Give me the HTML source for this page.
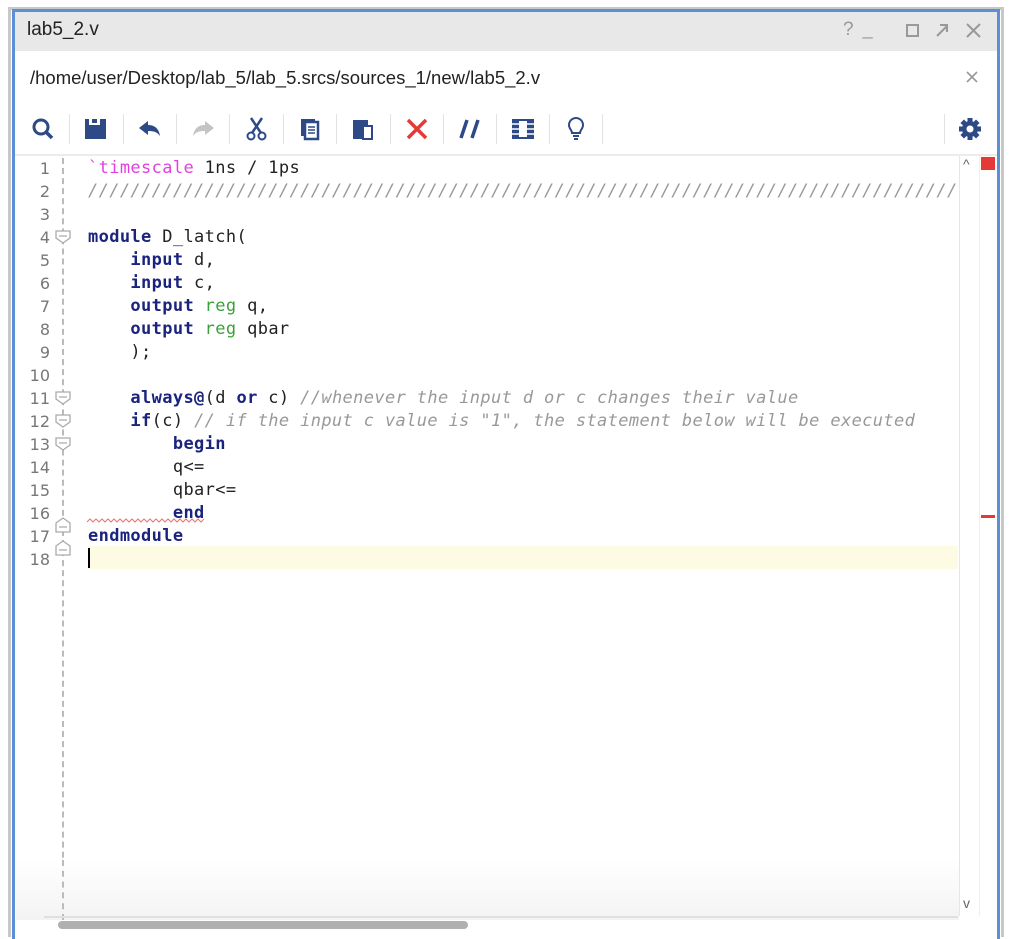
<!DOCTYPE html>
<html><head><meta charset="utf-8"><style>
*{margin:0;padding:0;box-sizing:border-box}
body{width:1024px;height:926px;background:#fff;position:relative;overflow:hidden;font-family:"Liberation Sans",sans-serif}
.abs{position:absolute}
.code{font-family:"DejaVu Sans Mono","Liberation Mono",monospace;font-size:17px;letter-spacing:0.37px;line-height:23px;white-space:pre;color:#222}
.ln{font-family:"DejaVu Sans",sans-serif;font-size:16px;color:#777;line-height:23px;text-align:right;width:34px}
.kw{color:#1a237e;font-weight:bold}
.gr{color:#3aa13a}
.mg{color:#e040e0}
.cm{color:#999;font-style:italic}
.sep{position:absolute;top:114px;width:1px;height:30px;background:#e2e2e2}
.ic{position:absolute;top:117px}
</style></head><body>
<!-- outer borders -->
<div class="abs" style="left:8px;top:7px;width:996px;height:930px;border:3px solid #c8c8c8;border-bottom:none"></div>
<div class="abs" style="left:12px;top:9px;width:988px;height:930px;border:3px solid #5b8fd6;border-bottom:none"></div>
<!-- title bar -->
<div class="abs" style="left:15px;top:12px;width:982px;height:39px;background:#e8e8e8"></div>
<div class="abs" style="left:27px;top:19px;font-size:19px;color:#222">lab5_2.v</div>
<div class="abs" style="left:843px;top:19px;font-size:19px;color:#999;letter-spacing:9px">?<span style="font-size:18px">_</span></div>
<div class="abs" style="left:906px;top:24px;width:13px;height:13px;border:2px solid #999"></div>
<svg class="abs" style="left:934px;top:22px" width="16" height="16"><path d="M3 14L13 4M6 3H13V10" stroke="#999" stroke-width="2" fill="none"/><path d="M3 8V14" stroke="#999" stroke-width="0"/></svg>
<svg class="abs" style="left:965px;top:22px" width="17" height="17"><path d="M2 2L15 15M15 2L2 15" stroke="#999" stroke-width="2"/></svg>
<!-- path bar -->
<div class="abs" style="left:30px;top:67px;font-size:18.5px;color:#222">/home/user/Desktop/lab_5/lab_5.srcs/sources_1/new/lab5_2.v</div>
<svg class="abs" style="left:966px;top:71px" width="12" height="12"><path d="M1 1L11 11M11 1L1 11" stroke="#999" stroke-width="1.6"/></svg>
<!-- toolbar -->
<svg class="ic" style="left:31px" width="24" height="24"><circle cx="10" cy="10" r="7" stroke="#2d4a86" stroke-width="3" fill="none"/><path d="M15 15L21 21" stroke="#2d4a86" stroke-width="3.5"/></svg>
<div class="sep" style="left:69px"></div>
<svg class="ic" style="left:84px" width="24" height="24"><path d="M1 2H5V8H16V2H22V22H1Z" fill="#2d4a86"/><rect x="8" y="2" width="5" height="4" fill="#2d4a86"/></svg>
<div class="sep" style="left:123px"></div>
<svg class="ic" style="left:138px" width="24" height="24"><path d="M1 11L10 4V8C17 8 21 12 22 19C19 15 16 14 10 14V18Z" fill="#2d4a86"/></svg>
<div class="sep" style="left:176px"></div>
<svg class="ic" style="left:191px" width="24" height="24"><path d="M23 11L14 4V8C7 8 3 12 2 19C5 15 8 14 14 14V18Z" fill="#c4c4c4"/></svg>
<div class="sep" style="left:229px"></div>
<svg class="ic" style="left:245px" width="24" height="24"><path d="M6 1L16 16M17 1L7 16" stroke="#2d4a86" stroke-width="2.5"/><circle cx="6" cy="19" r="3.5" stroke="#2d4a86" stroke-width="2" fill="none"/><circle cx="17" cy="19" r="3.5" stroke="#2d4a86" stroke-width="2" fill="none"/></svg>
<div class="sep" style="left:283px"></div>
<svg class="ic" style="left:299px" width="24" height="24"><rect x="2" y="2" width="14" height="17" fill="#2d4a86"/><rect x="6" y="5" width="13" height="17" fill="#fff" stroke="#2d4a86" stroke-width="2.5"/><path d="M9 10H16M9 13H16M9 16H16" stroke="#2d4a86" stroke-width="1.5"/></svg>
<div class="sep" style="left:336px"></div>
<svg class="ic" style="left:351px" width="24" height="24"><rect x="2" y="3" width="15" height="19" fill="#2d4a86"/><rect x="12" y="9" width="9" height="13" fill="#fff" stroke="#2d4a86" stroke-width="2"/></svg>
<div class="sep" style="left:390px"></div>
<svg class="ic" style="left:405px" width="24" height="24"><path d="M3 3L21 21M21 3L3 21" stroke="#e53935" stroke-width="3.5"/></svg>
<div class="sep" style="left:443px"></div>
<svg class="ic" style="left:458px" width="24" height="24"><path d="M9 3L3 21M20 3L14 21" stroke="#2d4a86" stroke-width="3.5"/></svg>
<div class="sep" style="left:496px"></div>
<svg class="ic" style="left:511px" width="24" height="24"><rect x="1" y="2" width="22" height="20" fill="#2d4a86"/><rect x="8" y="4" width="8" height="16" fill="#fff"/><path d="M1 7H23M1 12H23M1 17H23" stroke="#fff" stroke-width="1.5"/></svg>
<div class="sep" style="left:549px"></div>
<svg class="ic" style="left:564px" width="24" height="24"><path d="M8 16C8 13 5 12 5 8A7 7 0 0 1 19 8C19 12 16 13 16 16Z" stroke="#2d4a86" stroke-width="2" fill="none"/><path d="M9 19H15M10 22H14" stroke="#2d4a86" stroke-width="2"/></svg>
<div class="sep" style="left:602px"></div>
<div class="sep" style="left:944px"></div>
<svg class="ic" style="left:958px" width="24" height="24"><g fill="#2d4a86"><circle cx="12" cy="12" r="8"/><rect x="9.5" y="1" width="5" height="22"/><rect x="1" y="9.5" width="22" height="5"/><rect x="9.5" y="1" width="5" height="22" transform="rotate(45 12 12)"/><rect x="9.5" y="1" width="5" height="22" transform="rotate(-45 12 12)"/></g><circle cx="12" cy="12" r="3.5" fill="#fff"/></svg>
<div class="abs" style="left:15px;top:154px;width:982px;height:2px;background:#ececec"></div>
<!-- editor -->
<div class="abs" style="left:88px;top:546px;width:870px;height:23px;background:#fdfbe3"></div>
<div class="abs" style="left:62px;top:158px;height:760px;border-left:2px dashed #bbb"></div>
<div class="abs ln" style="left:16px;top:157px">1<br>2<br>3<br>4<br>5<br>6<br>7<br>8<br>9<br>10<br>11<br>12<br>13<br>14<br>15<br>16<br>17<br>18</div>
<svg class="abs" style="left:54px;top:157px" width="20" height="414">
<g fill="#fff" stroke="#aaa" stroke-width="1.3">
<path d="M2 74H16V81L9 86L2 81Z"/><path d="M2 235H16V242L9 247L2 242Z"/><path d="M2 258H16V265L9 270L2 265Z"/><path d="M2 281H16V288L9 293L2 288Z"/>
<path d="M2 366L9 361L16 366V375H2Z"/><path d="M2 389L9 384L16 389V398H2Z"/></g>
<g stroke="#aaa" stroke-width="1.3"><path d="M5 79H13M5 240H13M5 263H13M5 286H13M5 370H13M5 393H13"/></g></svg>
<div class="abs code" style="left:88px;top:157px"><span class="mg">`timescale</span> 1ns / 1ps
<span class="cm">//////////////////////////////////////////////////////////////////////////////////</span>

<span class="kw">module</span> D_latch(
    <span class="kw">input</span> d,
    <span class="kw">input</span> c,
    <span class="kw">output</span> <span class="gr">reg</span> q,
    <span class="kw">output</span> <span class="gr">reg</span> qbar
    );

    <span class="kw">always@</span>(d <span class="kw">or</span> c) <span class="cm">//whenever the input d or c changes their value</span>
    <span class="kw">if</span>(c) <span class="cm">// if the input c value is "1", the statement below will be executed</span>
        <span class="kw">begin</span>
        q&lt;=
        qbar&lt;=
        <span class="kw">end</span>
<span class="kw">endmodule</span>
</div>
<div class="abs" style="left:88px;top:548px;width:2px;height:20px;background:#000"></div>
<svg class="abs" style="left:87px;top:518px" width="120" height="6"><path d="M0 4L3 1L6 4L9 1L12 4L15 1L18 4L21 1L24 4L27 1L30 4L33 1L36 4L39 1L42 4L45 1L48 4L51 1L54 4L57 1L60 4L63 1L66 4L69 1L72 4L75 1L78 4L81 1L84 4L87 1L90 4L93 1L96 4L99 1L102 4L105 1L108 4L111 1L114 4L117 1" stroke="#e57373" stroke-width="1" fill="none"/></svg>
<!-- right scrollbar -->
<div class="abs" style="left:959px;top:156px;width:1px;height:760px;background:#e6e6e6"></div>
<div class="abs" style="left:979px;top:156px;width:1px;height:760px;background:#eee"></div>
<div class="abs" style="left:963px;top:156px;font-size:14px;color:#666">^</div>
<div class="abs" style="left:963px;top:895px;font-size:14px;color:#666">v</div>
<div class="abs" style="left:981px;top:157px;width:14px;height:13px;background:#e53935"></div>
<div class="abs" style="left:981px;top:515px;width:14px;height:3px;background:#e53935"></div>
<!-- bottom fade + h-scroll -->
<div class="abs" style="left:16px;top:860px;width:943px;height:60px;background:linear-gradient(#fff,#f3f3f3)"></div>
<div class="abs" style="left:62px;top:860px;height:60px;border-left:2px dashed #bbb"></div>
<div class="abs" style="left:44px;top:916px;width:914px;height:2px;background:#e0e0e0"></div>
<div class="abs" style="left:58px;top:921px;width:410px;height:8px;border-radius:4px;background:#b0b0b0"></div>
</body></html>
